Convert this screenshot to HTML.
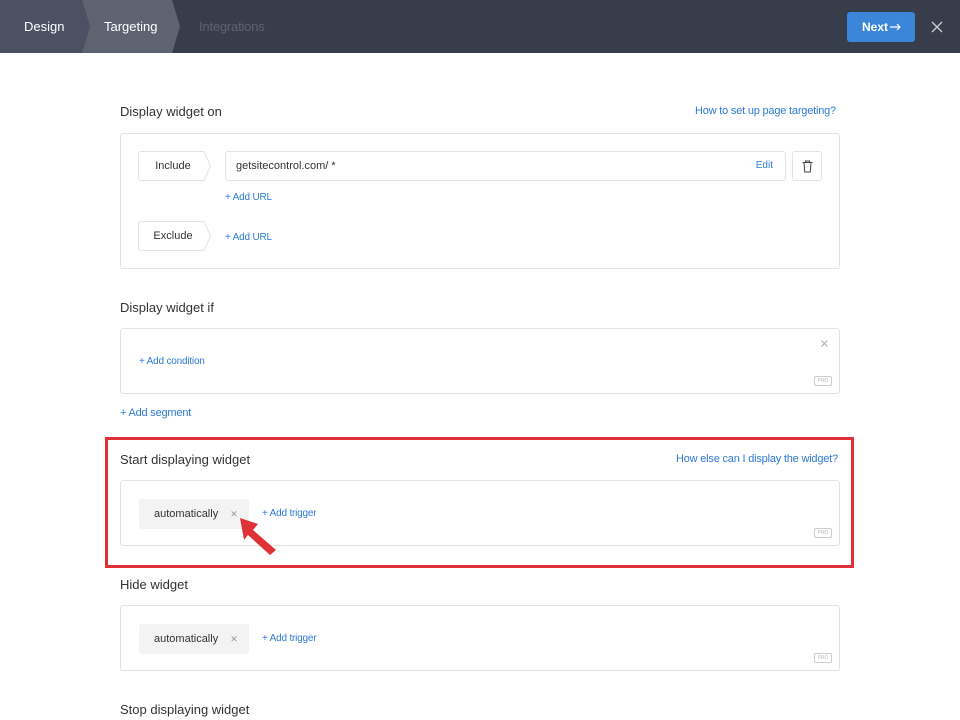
<!DOCTYPE html>
<html><head><meta charset="utf-8"><style>
*{box-sizing:border-box;margin:0;padding:0}
body{width:960px;height:720px;overflow:hidden;background:#fff;font-family:"Liberation Sans",sans-serif;color:#333;position:relative}
.hdr{position:absolute;left:0;top:0;width:960px;height:53px;background:#383d4c}
.abs{position:absolute}
.t{font-size:13px}
.lbl{position:absolute;left:120px;font-size:13px;color:#333}
.lnk{position:absolute;color:#2f7ad6;font-size:11px;letter-spacing:-0.2px}
.box{position:absolute;left:120px;width:720px;border:1px solid #e3e3e3;border-radius:3px;background:#fff}
.pill{position:absolute;border:1px solid #e3e3e3;border-radius:3px;font-size:11px;color:#333;text-align:center;background:#fff}
.chip{position:absolute;left:139px;width:110px;height:30px;background:#f3f3f3;border-radius:3px;font-size:11px;color:#333;line-height:30px;padding-left:15px}
.chip span{color:#999;font-size:9px;margin-left:12px}
.pro{position:absolute;width:18px;height:10px;border:1px solid #ccc;border-radius:2px;font-size:5px;color:#bbb;text-align:center;line-height:8px}
.arr{position:absolute;font-size:11px;color:#333;text-align:center;line-height:30px}
</style></head><body>
<div class="hdr"></div>
<svg class="abs" style="left:0;top:0" width="200" height="53">
<polygon points="0,0 82,0 90,26.5 82,53 0,53" fill="#4b5163"/>
<polygon points="82,0 172,0 180,26.5 172,53 82,53 90,26.5" fill="#5d6371"/>
</svg>
<div class="abs t" style="left:24px;top:19px;color:#fff">Design</div>
<div class="abs t" style="left:104px;top:19px;color:#fff">Targeting</div>
<div class="abs t" style="left:199px;top:19px;color:#5d6372;letter-spacing:-0.2px">Integrations</div>
<div class="abs" style="left:847px;top:12px;width:68px;height:30px;background:#3b86d9;border-radius:3px;color:#fff;font-size:12px;font-weight:bold;line-height:30px;padding-left:15px">Next<svg style="position:absolute;left:43px;top:11px" width="11" height="8"><path d="M0 4H10M7 1L10 4L7 7" stroke="#fff" stroke-width="1.2" fill="none"/></svg></div>
<svg class="abs" style="left:931px;top:21px" width="12" height="12"><path d="M1 1L11 11M11 1L1 11" stroke="#c9ccd3" stroke-width="1.4"/></svg>

<div class="lbl" style="top:104px">Display widget on</div>
<div class="lnk" style="left:695px;top:105px">How to set up page targeting?</div>
<div class="box" style="top:133px;height:136px"></div>
<svg class="abs" style="left:138px;top:151px" width="76" height="100">
<path d="M3 0.5H66L72.5 15L66 29.5H3A2.5 2.5 0 0 1 0.5 27V3A2.5 2.5 0 0 1 3 0.5Z" fill="#fff" stroke="#e3e3e3"/>
<path d="M3 70.5H66L72.5 85L66 99.5H3A2.5 2.5 0 0 1 0.5 97V73A2.5 2.5 0 0 1 3 70.5Z" fill="#fff" stroke="#e3e3e3"/>
</svg>
<div class="arr" style="left:138px;top:151px;width:70px">Include</div>
<div class="pill" style="left:225px;top:151px;width:561px;height:30px;line-height:28px;text-align:left;padding-left:10px">getsitecontrol.com/ *<span style="position:absolute;right:12px;color:#2f7ad6;font-size:10px">Edit</span></div>
<div class="pill" style="left:792px;top:151px;width:30px;height:30px"><svg style="position:absolute;left:9px;top:8px" width="11" height="13"><path d="M0.5 2.5H10.5M3.5 2.5V1H7.5V2.5M2 2.5L2.7 12H8.3L9 2.5" stroke="#444" stroke-width="1" fill="none"/></svg></div>
<div class="lnk" style="left:225px;top:192px;font-size:10px">+ Add URL</div>
<div class="arr" style="left:138px;top:221px;width:70px">Exclude</div>
<div class="lnk" style="left:225px;top:232px;font-size:10px">+ Add URL</div>

<div class="lbl" style="top:300px">Display widget if</div>
<div class="box" style="top:328px;height:66px"></div>
<div class="lnk" style="left:139px;top:356px;font-size:10px">+ Add condition</div>
<svg class="abs" style="left:821px;top:340px" width="7" height="7"><path d="M0.5 0.5L6.5 6.5M6.5 0.5L0.5 6.5" stroke="#aaa" stroke-width="1"/></svg>
<div class="pro" style="left:814px;top:376px">PRO</div>
<div class="lnk" style="left:120px;top:407px">+ Add segment</div>

<div class="abs" style="left:105px;top:437px;width:749px;height:131px;border:3px solid #e03236"></div>
<div class="lbl" style="top:452px">Start displaying widget</div>
<div class="lnk" style="left:676px;top:453px">How else can I display the widget?</div>
<div class="box" style="top:480px;height:66px"></div>
<div class="chip" style="top:499px">automatically<span>✕</span></div>
<div class="lnk" style="left:262px;top:508px;font-size:10px">+ Add trigger</div>
<div class="pro" style="left:814px;top:528px">PRO</div>
<svg class="abs" style="left:236px;top:514px" width="42" height="42"><polygon points="4,4 22,10 17,16 40,36 34,41 12,21 8,26" fill="#e03236"/></svg>

<div class="lbl" style="top:577px">Hide widget</div>
<div class="box" style="top:605px;height:66px"></div>
<div class="chip" style="top:624px">automatically<span>✕</span></div>
<div class="lnk" style="left:262px;top:633px;font-size:10px">+ Add trigger</div>
<div class="pro" style="left:814px;top:653px">PRO</div>

<div class="lbl" style="top:702px">Stop displaying widget</div>
</body></html>
